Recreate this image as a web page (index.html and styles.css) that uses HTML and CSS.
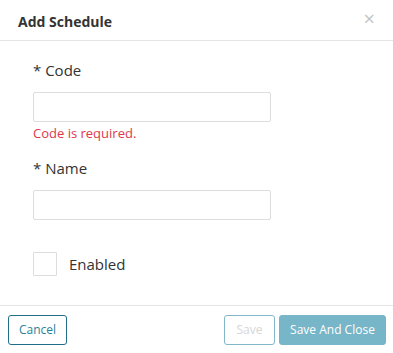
FILE: index.html
```html
<!DOCTYPE html>
<html>
<head>
<meta charset="utf-8">
<link rel="stylesheet" href="styles.css">
</head>
<body>
<div class="modal">
  <div class="modal-header">
    <span class="title">Add Schedule</span>
    <span class="close">&times;</span>
  </div>
  <div class="modal-body">
    <div class="field">
      <label class="label">* Code</label>
      <input class="input" type="text">
      <div class="error">Code is required.</div>
    </div>
    <div class="field field-name">
      <label class="label">* Name</label>
      <input class="input" type="text">
    </div>
    <div class="check-row">
      <span class="checkbox"></span>
      <span class="check-label">Enabled</span>
    </div>
  </div>
  <div class="modal-footer">
    <button class="btn btn-cancel">Cancel</button>
    <div class="right">
      <button class="btn btn-save">Save</button>
      <button class="btn btn-primary">Save And Close</button>
    </div>
  </div>
</div>
</body>
</html>
```
FILE: styles.css
```css
html, body {
  margin: 0;
  padding: 0;
  background: #fff;
  font-family: "Open Sans", "Liberation Sans", sans-serif;
  color: #333;
}
.modal {
  width: 393px;
  height: 353px;
  display: flex;
  flex-direction: column;
}
.modal-header {
  height: 41px;
  box-sizing: border-box;
  border-bottom: 1px solid #e5e5e5;
  display: flex;
  align-items: center;
  justify-content: space-between;
  padding: 0 18px 0 18px;
}
.title {
  font-size: 14px;
  font-weight: 700;
  color: #333;
  margin-top: 2px;
}
.close {
  font-size: 20px;
  color: #c4c4c4;
  line-height: 1;
  margin-top: -2px;
}
.modal-body {
  flex: 1;
  padding: 17px 33px 0 33px;
  box-sizing: border-box;
  border-bottom: 1px solid #e5e5e5;
}
.field {
  display: flex;
  flex-direction: column;
}
.label {
  font-size: 15px;
  line-height: 24px;
  color: #333;
}
.input {
  margin: 10px 0 0 0;
  width: 238px;
  height: 30px;
  box-sizing: border-box;
  border: 1px solid #ddd;
  border-radius: 2px;
  padding: 0 8px;
  font: inherit;
}
.error {
  font-size: 13px;
  color: #e0364b;
  line-height: 18px;
  margin-top: 2px;
}
.field-name {
  margin-top: 14px;
}
.check-row {
  display: flex;
  align-items: center;
  margin-top: 32px;
}
.checkbox {
  width: 24px;
  height: 24px;
  box-sizing: border-box;
  border: 1px solid #ddd;
  border-radius: 1px;
}
.check-label {
  font-size: 15px;
  margin-left: 12px;
  color: #333;
}
.modal-footer {
  height: 47px;
  display: flex;
  align-items: center;
  justify-content: space-between;
  padding: 0 7px 0 8px;
  box-sizing: border-box;
}
.right {
  display: flex;
  gap: 4px;
}
.btn {
  height: 30px;
  box-sizing: border-box;
  border-radius: 3px;
  font-family: "Open Sans", "Liberation Sans", sans-serif;
  font-size: 12px;
  padding: 0 10px;
  background: #fff;
  cursor: pointer;
}
.btn-cancel {
  width: 59px;
  border: 1px solid #1f6f8b;
  color: #2a7f9a;
}
.btn-save {
  width: 51px;
  border: 1px solid #80b7c9;
  color: #d6d6d6;
}
.btn-primary {
  width: 107px;
  border: 1px solid #77b5c8;
  background: #77b5c8;
  color: #fff;
}
```
